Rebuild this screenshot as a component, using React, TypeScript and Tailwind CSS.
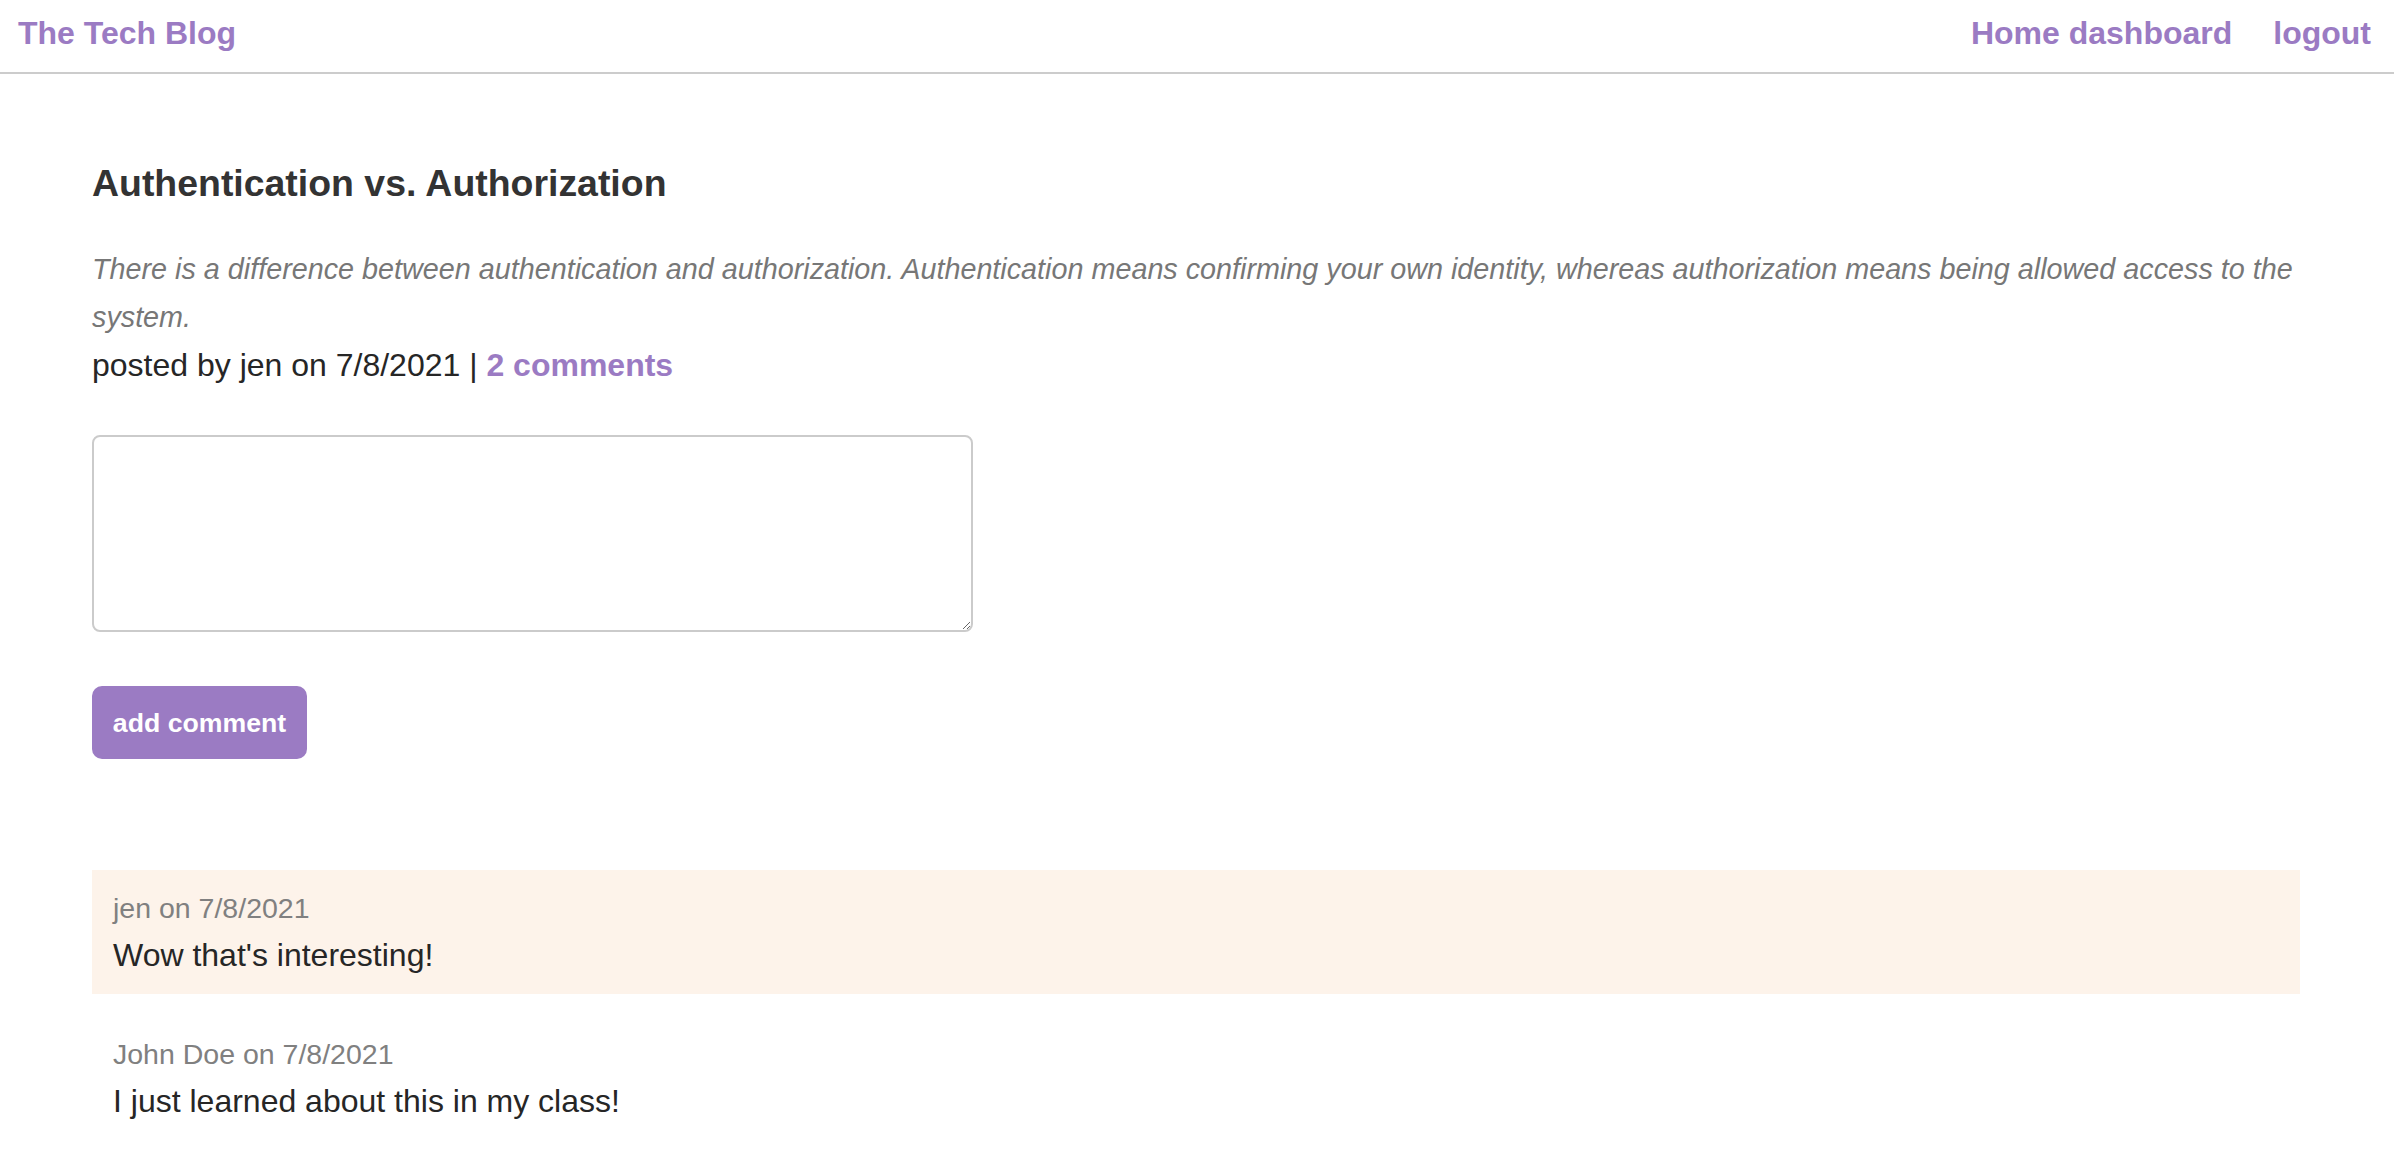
import React from "react";

const comments = [
  { author: "jen", date: "7/8/2021", text: "Wow that's interesting!", shaded: true },
  { author: "John Doe", date: "7/8/2021", text: "I just learned about this in my class!", shaded: false },
];

export default function App() {
  return (
    <div
      className="min-h-[1160px] bg-white text-[#222]"
      style={{ fontFamily: '"Liberation Sans", Arial, Helvetica, sans-serif' }}
    >
      <header className="flex h-[74px] items-start justify-between border-b-2 border-[#cccccc] pl-[18px] pr-[23px] pt-[9px]">
        <a href="#" className="text-[32px] font-bold leading-[48px] text-[#9b7bc3]">
          The Tech Blog
        </a>
        <nav className="flex gap-[41px]">
          <a href="#" className="text-[32px] font-bold leading-[48px] text-[#9b7bc3]">
            Home dashboard
          </a>
          <a href="#" className="text-[32px] font-bold leading-[48px] text-[#9b7bc3]">
            logout
          </a>
        </nav>
      </header>

      <main className="ml-[92px] mr-[94px] pt-[87px]">
        <h3 className="text-[37.44px] font-bold leading-[45px] text-[#333]">
          Authentication vs. Authorization
        </h3>
        <p className="mt-[40px] text-[28.75px] italic leading-[47.5px] text-[#777]">
          There is a difference between authentication and authorization. Authentication means
          confirming your own identity, whereas authorization means being allowed access to the
          system.
        </p>
        <p className="text-[32px] leading-[48px] text-[#262626]">
          posted by jen on 7/8/2021 |{" "}
          <a href="#" className="font-bold text-[#9b7bc3]">
            2 comments
          </a>
        </p>

        <form className="mt-[46px] flex flex-col items-start">
          <textarea
            className="h-[197px] w-[881px] rounded-[8px] border-2 border-[#cbcbcb] bg-white p-2 text-[28px] outline-none"
            aria-label="comment"
          />
          <button
            type="button"
            className="mt-[54px] flex h-[73px] w-[215px] items-center justify-center rounded-[10px] bg-[#9b7bc3] text-[26.67px] font-bold text-white"
          >
            add comment
          </button>
        </form>

        <section className="mt-[111px] flex flex-col gap-[22px]">
          {comments.map((c) => (
            <div
              key={c.author}
              className={
                c.shaded
                  ? "bg-[#fdf3ea] pl-[21px] pr-[21px] pt-[16px] pb-[15px]"
                  : "pl-[21px] pr-[21px] pt-[16px] pb-[15px]"
              }
            >
              <div className="text-[28.5px] leading-[45px] text-[#808080]">
                {c.author} on {c.date}
              </div>
              <div className="text-[32px] leading-[48px] text-[#262626]">{c.text}</div>
            </div>
          ))}
        </section>
      </main>
    </div>
  );
}
